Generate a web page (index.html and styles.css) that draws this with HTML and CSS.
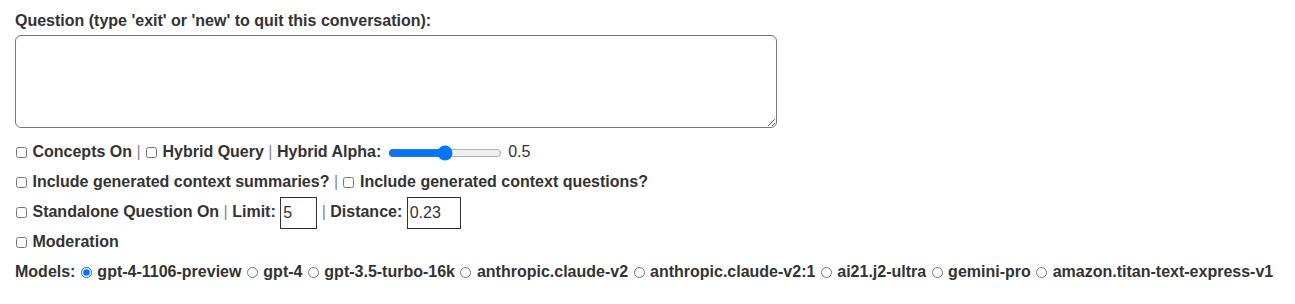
FILE: index.html
```html
<html>
    <head>
        <link rel="stylesheet" href="styles.css">
    </head>
    <body>
        <div class="chat-form">
            <label class="question-label" for="question">Question (type 'exit' or 'new' to quit this conversation):</label>
            <textarea id="question" class="question"></textarea>
            <div class="row">
                <input type="checkbox" id="concepts"> <label for="concepts">Concepts On</label> |
                <input type="checkbox" id="hybrid"> <label for="hybrid">Hybrid Query</label> |
                <label for="alpha">Hybrid Alpha:</label>
                <input type="range" id="alpha" class="alpha" min="0" max="1" step="0.1" value="0.5">
                <span class="alpha-value">0.5</span>
            </div>
            <div class="row">
                <input type="checkbox" id="summaries"> <label for="summaries">Include generated context summaries?</label> |
                <input type="checkbox" id="questions"> <label for="questions">Include generated context questions?</label>
            </div>
            <div class="row">
                <input type="checkbox" id="standalone"> <label for="standalone">Standalone Question On</label> |
                <label for="limit">Limit:</label> <input type="text" id="limit" class="num limit" value="5"> |
                <label for="distance">Distance:</label> <input type="text" id="distance" class="num distance" value="0.23">
            </div>
            <div class="row">
                <input type="checkbox" id="moderation"> <label for="moderation">Moderation</label>
            </div>
            <div class="row">
                <label>Models:</label>
                <input type="radio" name="model" id="m1" checked> <label for="m1">gpt-4-1106-preview</label>
                <input type="radio" name="model" id="m2"> <label for="m2">gpt-4</label>
                <input type="radio" name="model" id="m3"> <label for="m3">gpt-3.5-turbo-16k</label>
                <input type="radio" name="model" id="m4"> <label for="m4">anthropic.claude-v2</label>
                <input type="radio" name="model" id="m5"> <label for="m5">anthropic.claude-v2:1</label>
                <input type="radio" name="model" id="m6"> <label for="m6">ai21.j2-ultra</label>
                <input type="radio" name="model" id="m7"> <label for="m7">gemini-pro</label>
                <input type="radio" name="model" id="m8"> <label for="m8">amazon.titan-text-express-v1</label>
            </div>
        </div>
    </body>
</html>
```

FILE: styles.css
```css
body {
    margin: 0;
    font-family: "Liberation Sans", Arial, sans-serif;
    font-size: 16px;
    color: #333;
    background: #fff;
}

label {
    font-weight: bold;
}

.chat-form {
    padding: 12px 15px;
}

.question-label {
    display: block;
    margin-bottom: 5px;
}

.question {
    display: block;
    width: 762px;
    height: 93px;
    box-sizing: border-box;
    border: 1px solid #767676;
    border-radius: 6px;
    margin-bottom: 9px;
}

.row {
    height: 30px;
    line-height: 30px;
    white-space: nowrap;
    color: #888;
}

.row label {
    color: #333;
}

.row input[type="checkbox"],
.row input[type="radio"] {
    width: 11px;
    height: 11px;
    margin: 0 1px 0 1px;
    vertical-align: -1px;
}

.alpha {
    width: 114px;
    margin: 0 2px;
    vertical-align: middle;
}

.alpha-value {
    color: #333;
}

.num {
    box-sizing: border-box;
    height: 32px;
    border: 1px solid #333;
    font-family: "Liberation Sans", Arial, sans-serif;
    font-size: 16px;
    color: #333;
    padding: 0 2px;
    vertical-align: middle;
}

.limit {
    width: 37px;
}

.distance {
    width: 54px;
}
```
